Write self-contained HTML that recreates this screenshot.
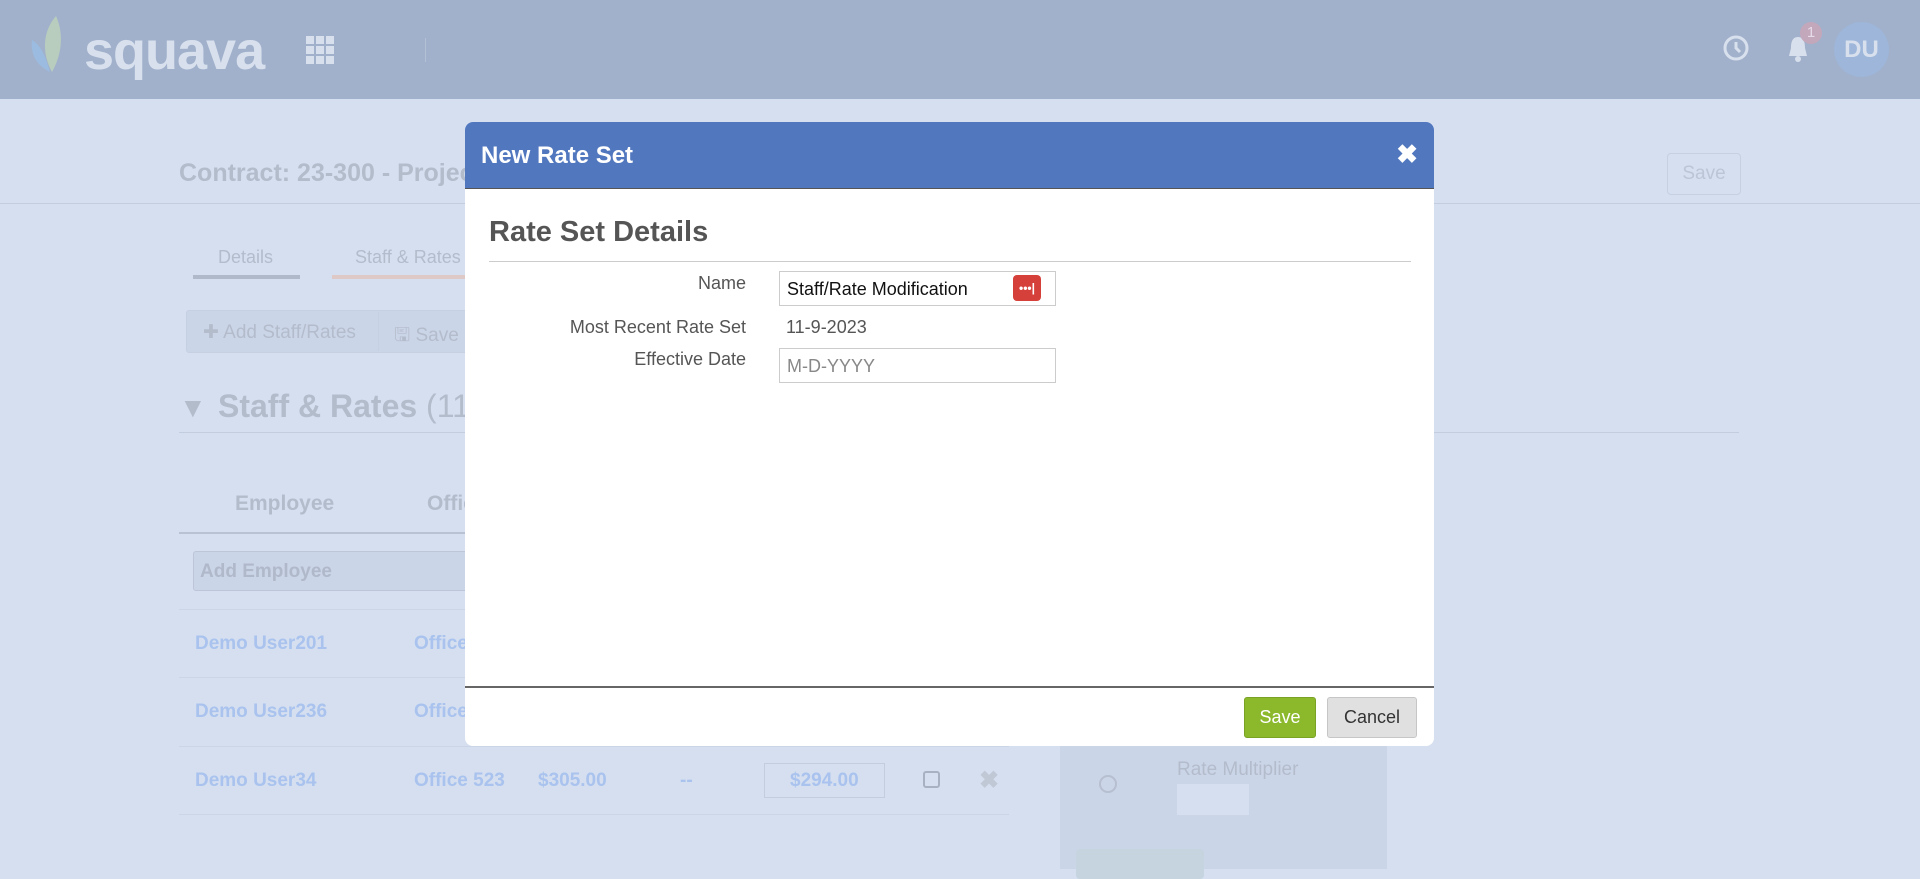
<!DOCTYPE html>
<html><head><meta charset="utf-8"><style>
*{box-sizing:border-box;margin:0;padding:0}
body{width:1920px;height:869px;overflow:hidden;background:#d5dff0;font-family:"Liberation Sans",sans-serif;position:relative}
.a{position:absolute}
.g{color:#b3bccb}
.lk{color:#a9c3ee;font-weight:bold;font-size:19px}
</style></head><body>
<!-- header -->
<div class="a" style="left:0;top:0;width:1920px;height:99px;background:#a1b1cb"></div>
<svg class="a" style="left:28px;top:14px" width="48" height="62" viewBox="0 0 48 62"><path d="M28 2C14 18 14 40 24 58C34 40 36 20 28 2Z" fill="#b9cdbe"/><path d="M4 26C2 42 10 52 22 58C18 44 14 32 4 26Z" fill="#9bbbe0"/></svg>
<div class="a" style="left:84px;top:20px;font-size:54px;font-weight:bold;color:#d8e0ee;letter-spacing:-1px">squava</div>
<div class="a" style="left:306px;top:36px;width:28px;height:28px;display:grid;grid-template-columns:repeat(3,8px);gap:2px">
<i style="background:#d8e0ee"></i><i style="background:#d8e0ee"></i><i style="background:#d8e0ee"></i><i style="background:#d8e0ee"></i><i style="background:#d8e0ee"></i><i style="background:#d8e0ee"></i><i style="background:#d8e0ee"></i><i style="background:#d8e0ee"></i><i style="background:#d8e0ee"></i></div>
<div class="a" style="left:425px;top:38px;width:1px;height:24px;background:#b3c0d6"></div>
<svg class="a" style="left:1722px;top:34px" width="28" height="28" viewBox="0 0 28 28"><circle cx="14" cy="14" r="11" fill="none" stroke="#d8e0ee" stroke-width="3"/><path d="M14 8V14L18 18" stroke="#d8e0ee" stroke-width="3" fill="none"/></svg>
<svg class="a" style="left:1786px;top:34px" width="24" height="30" viewBox="0 0 24 30"><path d="M12 3C6 3 5 9 5 14L3 22H21L19 14C19 9 18 3 12 3Z" fill="#d8e0ee"/><circle cx="12" cy="25" r="3" fill="#d8e0ee"/></svg>
<div class="a" style="left:1800px;top:22px;width:22px;height:22px;border-radius:50%;background:#c3a7bb;color:#e6dbe6;font-size:15px;text-align:center;line-height:22px">1</div>
<div class="a" style="left:1834px;top:22px;width:55px;height:55px;border-radius:50%;background:#9db6d9;color:#d8e0ee;font-size:24px;font-weight:bold;text-align:center;line-height:55px">DU</div>
<!-- bg content -->
<div class="a g" style="left:179px;top:159px;font-size:25px;font-weight:bold">Contract: 23-300 - Project</div>
<div class="a" style="left:1667px;top:153px;width:74px;height:42px;border:1px solid #c6d0e3;border-radius:4px;color:#bcc5d6;font-size:19px;text-align:center;line-height:40px">Save</div>
<div class="a" style="left:0;top:203px;width:1920px;height:1px;background:#c2cde0"></div>
<div class="a g" style="left:218px;top:247px;font-size:18px">Details</div>
<div class="a" style="left:193px;top:275px;width:107px;height:4px;background:#b0b9ca"></div>
<div class="a g" style="left:355px;top:247px;font-size:18px">Staff &amp; Rates</div>
<div class="a" style="left:332px;top:275px;width:140px;height:4px;background:#dec9c6"></div>
<div class="a" style="left:186px;top:310px;width:300px;height:43px;background:#cbd5e8;border:1px solid #c6d0e3;border-radius:3px"></div>
<div class="a g" style="left:203px;top:321px;font-size:19px">✚ Add Staff/Rates</div>
<div class="a" style="left:378px;top:312px;width:1px;height:39px;background:#c6d0e3"></div>
<div class="a g" style="left:394px;top:321px;font-size:19px">🖫 Save</div>
<div class="a g" style="left:179px;top:392px;font-size:28px;font-weight:bold">▼</div>
<div class="a g" style="left:218px;top:388px;font-size:32px;font-weight:bold">Staff &amp; Rates <span style="font-weight:normal">(11-9-2023)</span></div>
<div class="a" style="left:179px;top:432px;width:1560px;height:1px;background:#c2cde0"></div>
<div class="a g" style="left:235px;top:492px;font-size:21px;font-weight:bold">Employee</div>
<div class="a g" style="left:427px;top:492px;font-size:21px;font-weight:bold">Office</div>
<div class="a" style="left:179px;top:532px;width:880px;height:2px;background:#b9c2d3"></div>
<div class="a" style="left:193px;top:551px;width:300px;height:40px;background:#cbd5e8;border:1px solid #bcc6d8;border-radius:3px;color:#b0b9ca;font-size:19px;font-weight:bold;padding:9px 6px">Add Employee</div>
<div class="a" style="left:179px;top:609px;width:830px;height:1px;background:#cbd5e8"></div>
<div class="a" style="left:179px;top:677px;width:830px;height:1px;background:#cbd5e8"></div>
<div class="a" style="left:179px;top:746px;width:830px;height:1px;background:#cbd5e8"></div>
<div class="a" style="left:179px;top:814px;width:830px;height:1px;background:#cbd5e8"></div>
<div class="a lk" style="left:195px;top:633px">Demo User201</div><div class="a lk" style="left:414px;top:633px">Office</div>
<div class="a lk" style="left:195px;top:701px">Demo User236</div><div class="a lk" style="left:414px;top:701px">Office</div>
<div class="a lk" style="left:195px;top:770px">Demo User34</div><div class="a lk" style="left:414px;top:770px">Office 523</div>
<div class="a lk" style="left:538px;top:770px">$305.00</div>
<div class="a lk" style="left:680px;top:770px">--</div>
<div class="a" style="left:764px;top:763px;width:121px;height:35px;border:1px solid #c2cde0"></div>
<div class="a lk" style="left:790px;top:770px">$294.00</div>
<div class="a" style="left:923px;top:771px;width:17px;height:17px;border:2px solid #a8b1c2;border-radius:3px"></div>
<div class="a" style="left:979px;top:766px;font-size:24px;color:#c0c8d6;font-weight:bold">✖</div>
<div class="a" style="left:1060px;top:700px;width:327px;height:169px;background:#cbd5e8"></div>
<div class="a" style="left:1099px;top:775px;width:18px;height:18px;border:2px solid #b6bfd0;border-radius:50%"></div>
<div class="a g" style="left:1177px;top:759px;font-size:19px">Rate Multiplier</div>
<div class="a" style="left:1177px;top:784px;width:72px;height:31px;background:#d5dff0"></div>
<div class="a" style="left:1076px;top:849px;width:128px;height:30px;background:#c5d4df;border-radius:4px"></div>
<!-- modal -->
<div class="a" style="left:465px;top:122px;width:969px;height:624px;background:#fff;border-radius:8px;overflow:hidden">
<div style="height:67px;background:#5177bf;border-bottom:1px solid #555;position:relative">
<div class="a" style="left:16px;top:20px;color:#fff;font-size:24px;font-weight:bold">New Rate Set</div>
<div class="a" style="right:16px;top:17px;color:#fff;font-size:26px;font-weight:bold">✖</div></div>
<div class="a" style="left:24px;top:94px;font-size:29px;font-weight:bold;color:#555">Rate Set Details</div>
<div class="a" style="left:24px;top:139px;width:922px;height:1px;background:#ccc"></div>
<div class="a" style="right:688px;top:151px;font-size:18px;color:#555">Name</div>
<div class="a" style="left:314px;top:149px;width:277px;height:35px;border:1px solid #ccc;font-size:18px;color:#111;padding:7px 7px">Staff/Rate Modification</div>
<div class="a" style="left:548px;top:153px;width:28px;height:26px;background:#d6403b;border-radius:4px;color:#fff;font-size:12px;text-align:center;line-height:26px;font-weight:bold">•••|</div>
<div class="a" style="right:688px;top:195px;font-size:18px;color:#555">Most Recent Rate Set</div>
<div class="a" style="left:321px;top:195px;font-size:18px;color:#555">11-9-2023</div>
<div class="a" style="right:688px;top:227px;font-size:18px;color:#555">Effective Date</div>
<div class="a" style="left:314px;top:226px;width:277px;height:35px;border:1px solid #ccc;font-size:18px;color:#888;padding:7px 7px">M-D-YYYY</div>
<div class="a" style="left:0;top:564px;width:969px;height:2px;background:#666"></div>
<div class="a" style="left:779px;top:575px;width:72px;height:41px;background:#8cb92c;border:1px solid #7aa326;border-radius:3px;color:#fff;font-size:18px;text-align:center;line-height:39px">Save</div>
<div class="a" style="left:862px;top:575px;width:90px;height:41px;background:#e0e0e0;border:1px solid #c6c6c6;border-radius:3px;color:#333;font-size:18px;text-align:center;line-height:39px">Cancel</div>
</div>
</body></html>
